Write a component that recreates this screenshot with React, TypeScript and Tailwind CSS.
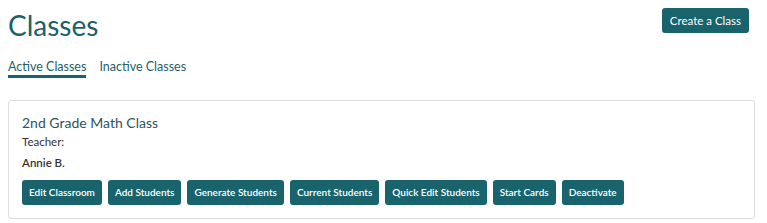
import React from "react";

const ACTIONS = [
  "Edit Classroom",
  "Add Students",
  "Generate Students",
  "Current Students",
  "Quick Edit Students",
  "Start Cards",
  "Deactivate",
];

export default function App() {
  return (
    <div className="min-h-screen bg-white px-2 pt-2 font-['Lato','Noto_Sans',sans-serif] text-[#333]">
      <div className="flex items-start justify-between pr-[10px]">
        <h1 className="text-[28px] leading-[34px] text-[#1d5f6b]">Classes</h1>
        <button
          type="button"
          className="h-[25px] rounded-[3px] bg-[#19636d] px-[8px] text-[11.5px] text-white"
        >
          Create a Class
        </button>
      </div>

      <div className="mt-[17px] flex gap-[13px] text-[12.5px] leading-[16px]">
        <span className="border-b-[3px] border-[#19636d] text-[#1d5f6b]">Active Classes</span>
        <span className="text-[#1d5f6b]">Inactive Classes</span>
      </div>

      <div className="mt-[22px] w-[747px] rounded-[3px] border border-[#ddd] px-[13px] pb-[13px] pt-[13px]">
        <div className="text-[14px] leading-[18px] text-[#2e5560]">2nd Grade Math Class</div>
        <div className="mt-[2px] text-[11.5px] leading-[15px]">Teacher:</div>
        <div className="mt-[6px] text-[11.5px] leading-[15px] font-semibold">Annie B.</div>
        <div className="mt-[10px] flex gap-[6px]">
          {ACTIONS.map((a) => (
            <button
              key={a}
              type="button"
              className="h-[25px] rounded-[3px] bg-[#19636d] px-[7px] text-[10px] font-semibold text-white"
            >
              {a}
            </button>
          ))}
        </div>
      </div>
    </div>
  );
}
